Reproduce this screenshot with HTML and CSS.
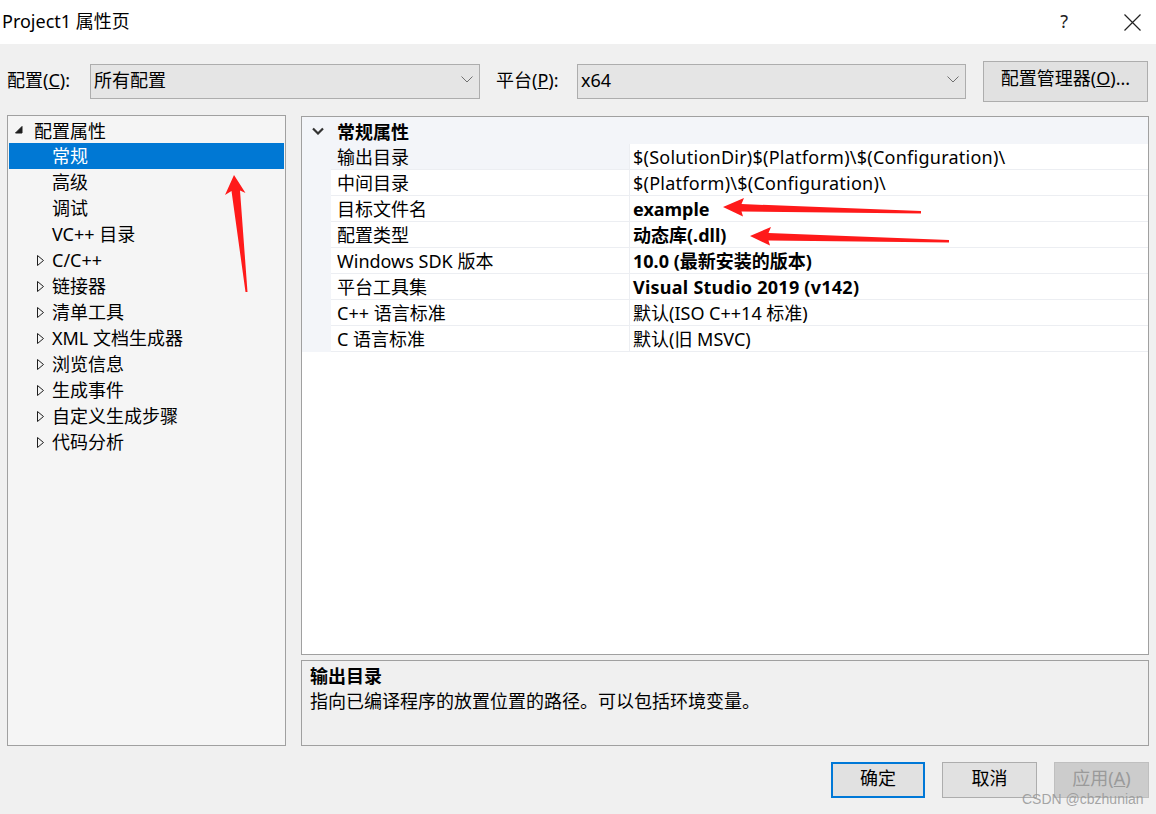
FILE: index.html
```html
<!DOCTYPE html>
<html lang="zh-CN">
<head>
<meta charset="utf-8">
<title>Project1 属性页</title>
<link rel="stylesheet" href="styles.css">
</head>
<body>
<div class="dialog">
  <header class="titlebar">
    <div class="title">Project1 属性页</div>
    <div class="title-actions">
      <span class="help">?</span>
      <svg class="close" width="17" height="17" viewBox="0 0 17 17"><path d="M0.5 0.5L16.5 16.5M16.5 0.5L0.5 16.5"/></svg>
    </div>
  </header>

  <div class="config-row">
    <label class="lbl lbl-config">配置(<u>C</u>):</label>
    <div class="combo combo-config">
      <span class="combo-text">所有配置</span>
      <svg class="chev" width="12" height="7" viewBox="0 0 12 7"><path d="M0.5 0.5L6 6L11.5 0.5"/></svg>
    </div>
    <label class="lbl lbl-platform">平台(<u>P</u>):</label>
    <div class="combo combo-platform">
      <span class="combo-text">x64</span>
      <svg class="chev" width="12" height="7" viewBox="0 0 12 7"><path d="M0.5 0.5L6 6L11.5 0.5"/></svg>
    </div>
    <button class="btn btn-manager"><span class="btn-label">配置管理器(<u>O</u>)...</span></button>
  </div>

  <div class="main">
    <nav class="tree">
      <div class="node root"><svg class="twisty" width="8" height="8" viewBox="0 0 8 8"><path class="open" d="M7 0.5V7H0.5Z"/></svg><span>配置属性</span></div>
      <div class="node leaf selected"><span>常规</span></div>
      <div class="node leaf"><span>高级</span></div>
      <div class="node leaf"><span>调试</span></div>
      <div class="node leaf"><span>VC++ 目录</span></div>
      <div class="node branch"><svg class="twisty" width="8" height="11" viewBox="0 0 8 11"><path class="shut" d="M0.5 0.5L6.5 5.5L0.5 10.5Z"/></svg><span>C/C++</span></div>
      <div class="node branch"><svg class="twisty" width="8" height="11" viewBox="0 0 8 11"><path class="shut" d="M0.5 0.5L6.5 5.5L0.5 10.5Z"/></svg><span>链接器</span></div>
      <div class="node branch"><svg class="twisty" width="8" height="11" viewBox="0 0 8 11"><path class="shut" d="M0.5 0.5L6.5 5.5L0.5 10.5Z"/></svg><span>清单工具</span></div>
      <div class="node branch"><svg class="twisty" width="8" height="11" viewBox="0 0 8 11"><path class="shut" d="M0.5 0.5L6.5 5.5L0.5 10.5Z"/></svg><span>XML 文档生成器</span></div>
      <div class="node branch"><svg class="twisty" width="8" height="11" viewBox="0 0 8 11"><path class="shut" d="M0.5 0.5L6.5 5.5L0.5 10.5Z"/></svg><span>浏览信息</span></div>
      <div class="node branch"><svg class="twisty" width="8" height="11" viewBox="0 0 8 11"><path class="shut" d="M0.5 0.5L6.5 5.5L0.5 10.5Z"/></svg><span>生成事件</span></div>
      <div class="node branch"><svg class="twisty" width="8" height="11" viewBox="0 0 8 11"><path class="shut" d="M0.5 0.5L6.5 5.5L0.5 10.5Z"/></svg><span>自定义生成步骤</span></div>
      <div class="node branch"><svg class="twisty" width="8" height="11" viewBox="0 0 8 11"><path class="shut" d="M0.5 0.5L6.5 5.5L0.5 10.5Z"/></svg><span>代码分析</span></div>
    </nav>

    <div class="right">
      <div class="grid">
        <div class="cat-row">
          <div class="gutter"><svg class="cat-chev" width="12" height="8" viewBox="0 0 12 8"><path d="M1 1.5L6 6.5L11 1.5"/></svg></div>
          <div class="cat-name">常规属性</div>
        </div>
        <div class="prop-row active">
          <div class="gutter"></div>
          <div class="prop-name">输出目录</div>
          <div class="prop-value latin">$(SolutionDir)$(Platform)\$(Configuration)\</div>
        </div>
        <div class="prop-row">
          <div class="gutter"></div>
          <div class="prop-name">中间目录</div>
          <div class="prop-value latin">$(Platform)\$(Configuration)\</div>
        </div>
        <div class="prop-row">
          <div class="gutter"></div>
          <div class="prop-name">目标文件名</div>
          <div class="prop-value set">example</div>
        </div>
        <div class="prop-row">
          <div class="gutter"></div>
          <div class="prop-name">配置类型</div>
          <div class="prop-value set">动态库(.dll)</div>
        </div>
        <div class="prop-row">
          <div class="gutter"></div>
          <div class="prop-name">Windows SDK 版本</div>
          <div class="prop-value set">10.0 (最新安装的版本)</div>
        </div>
        <div class="prop-row">
          <div class="gutter"></div>
          <div class="prop-name">平台工具集</div>
          <div class="prop-value set latin">Visual Studio 2019 (v142)</div>
        </div>
        <div class="prop-row">
          <div class="gutter"></div>
          <div class="prop-name">C++ 语言标准</div>
          <div class="prop-value">默认(ISO C++14 标准)</div>
        </div>
        <div class="prop-row">
          <div class="gutter"></div>
          <div class="prop-name">C 语言标准</div>
          <div class="prop-value">默认(旧 MSVC)</div>
        </div>
      </div>
      <div class="desc">
        <div class="desc-title">输出目录</div>
        <div class="desc-text">指向已编译程序的放置位置的路径。可以包括环境变量。</div>
      </div>
    </div>
  </div>

  <footer class="buttons">
    <button class="btn btn-ok"><span class="btn-label">确定</span></button>
    <button class="btn btn-cancel"><span class="btn-label">取消</span></button>
    <button class="btn btn-apply" disabled><span class="btn-label">应用(<u>A</u>)</span></button>
  </footer>

  <div class="watermark">CSDN @cbzhunian</div>

  <svg class="annotations" width="1156" height="814" viewBox="0 0 1156 814">
    <polygon points="234,175 245.5,193 240,190.5 247.5,292 245.5,292 231.5,191 225,195"/>
    <polygon points="723,207 744,198 741.5,204 921,211 921,213.5 741.5,211.5 743,216.5"/>
    <polygon points="750,236 771,227 768.5,233 949,240 949,242.5 768.5,240.5 770,245.5"/>
  </svg>
</div>
</body>
</html>
```

FILE: styles.css
```css
* {
  box-sizing: border-box;
}

body {
  margin: 0;
  background: #f0f0f0;
  font-family: "Noto Sans", "Noto Sans CJK SC", sans-serif;
  font-size: 18px;
  color: #000;
}

.dialog {
  position: relative;
  width: 1156px;
  height: 814px;
  overflow: hidden;
  background: #f0f0f0;
}

/* title bar */
.titlebar {
  height: 44px;
  background: #fff;
  display: flex;
  align-items: center;
  justify-content: space-between;
  padding: 0 15px 0 2px;
}

.title {
  font-size: 18px;
  line-height: 24px;
  margin-top: -2px;
}

.title-actions {
  display: flex;
  align-items: center;
  gap: 56px;
}

.help {
  font-size: 18px;
  line-height: 24px;
  color: #222;
  margin-top: -2px;
}

.close path {
  stroke: #222;
  stroke-width: 1.2;
  fill: none;
}

/* configuration row */
.config-row {
  display: flex;
  align-items: center;
  height: 58px;
  padding: 17px 8px 0 7px;
}

.lbl {
  font-size: 18px;
  line-height: 24px;
  margin-top: -4px;
}

.lbl-config {
  width: 83px;
}

.lbl-platform {
  width: 81px;
  margin-left: 16px;
}

.combo {
  height: 35px;
  border: 1px solid #adadad;
  background: #e5e5e5;
  display: flex;
  align-items: center;
  justify-content: space-between;
  padding: 0 6px 0 3px;
}

.combo-config {
  width: 390px;
}

.combo-platform {
  width: 389px;
}

.combo-text {
  line-height: 24px;
  margin-top: -4px;
}

.chev {
  margin-top: -4px;
}

.chev path {
  stroke: #707070;
  stroke-width: 1;
  fill: none;
}

.btn {
  font-family: inherit;
  font-size: 18px;
  color: #000;
  background: #e1e1e1;
  border: 1px solid #adadad;
  padding: 0;
  line-height: 24px;
}

.btn-label {
  display: block;
  position: relative;
  top: -2px;
}

.btn-manager {
  width: 165px;
  height: 41px;
  margin-left: 17px;
}

.btn-manager .btn-label {
  top: -4px;
}

/* main area */
.main {
  display: flex;
  gap: 15px;
  padding-left: 7px;
  margin-top: 13px;
}

.tree {
  width: 279px;
  height: 631px;
  border: 1px solid #a0a0a0;
  background: #f5f5f5;
  padding: 1px;
}

.node {
  height: 26px;
  display: flex;
  align-items: center;
  line-height: 24px;
  white-space: nowrap;
}

.node.root {
  padding-left: 6px;
  padding-top: 1px;
}

.node.root .twisty {
  margin-right: 11px;
  margin-top: -2px;
}

.node.leaf {
  padding-left: 43px;
}

.node.branch {
  padding-left: 28px;
}

.node.branch .twisty {
  margin-right: 7px;
}

.open {
  fill: #1e1e1e;
  stroke: #1e1e1e;
  stroke-width: 1;
}

.shut {
  fill: none;
  stroke: #1e1e1e;
  stroke-width: 1;
}

.node.selected {
  background: #0078d4;
  color: #fff;
}

.right {
  width: 848px;
  display: flex;
  flex-direction: column;
  margin-top: 1px;
}

/* property grid */
.grid {
  height: 539px;
  border: 1px solid #a0a0a0;
  background: #fff;
}

.cat-row {
  height: 27px;
  display: flex;
  align-items: center;
  background: #f3f5f9;
}

.cat-row .gutter {
  width: 35px;
  display: flex;
  align-items: center;
  padding-left: 10px;
}

.cat-chev path {
  stroke: #333;
  stroke-width: 2.2;
  fill: none;
}

.cat-name {
  font-weight: 700;
  line-height: 24px;
  padding-top: 3px;
}

.prop-row {
  height: 26px;
  display: flex;
}

.prop-row .gutter {
  width: 29px;
  background: #f3f5f9;
}

.prop-name {
  width: 299px;
  padding: 2px 0 0 6px;
  border-right: 1px solid #eceef2;
  border-bottom: 1px solid #eceef2;
  line-height: 23px;
  white-space: nowrap;
}

.prop-row.active .prop-name {
  background: #f3f5f9;
}

.prop-value {
  flex: 1;
  padding: 2px 0 0 3px;
  border-bottom: 1px solid #eceef2;
  line-height: 23px;
  white-space: nowrap;
}

.prop-value.latin {
  letter-spacing: 0.25px;
}

.prop-value.set {
  font-weight: 700;
}

/* description pane */
.desc {
  height: 86px;
  margin-top: 5px;
  border: 1px solid #a0a0a0;
  background: #f0f0f0;
  padding: 3px 8px;
}

.desc-title {
  font-weight: 700;
  line-height: 25px;
}

.desc-text {
  line-height: 25px;
}

/* dialog buttons */
.buttons {
  display: flex;
  justify-content: flex-end;
  gap: 17px;
  padding-right: 7px;
  margin-top: 16px;
}

.buttons .btn {
  height: 36px;
}

.btn-ok {
  width: 94px;
  border: 2px solid #0078d7;
}

.btn-cancel {
  width: 95px;
}

.btn-apply {
  width: 95px;
  background: #cccccc;
  border-color: #bfbfbf;
  color: #9a9a9a;
}

.watermark {
  position: absolute;
  left: 1022px;
  top: 790px;
  font-family: "Liberation Sans", sans-serif;
  font-size: 14px;
  line-height: 18px;
  color: rgba(150, 150, 150, 0.85);
}

.annotations {
  position: absolute;
  left: 0;
  top: 0;
  pointer-events: none;
}

.annotations polygon {
  fill: #ff1a1a;
}
```
